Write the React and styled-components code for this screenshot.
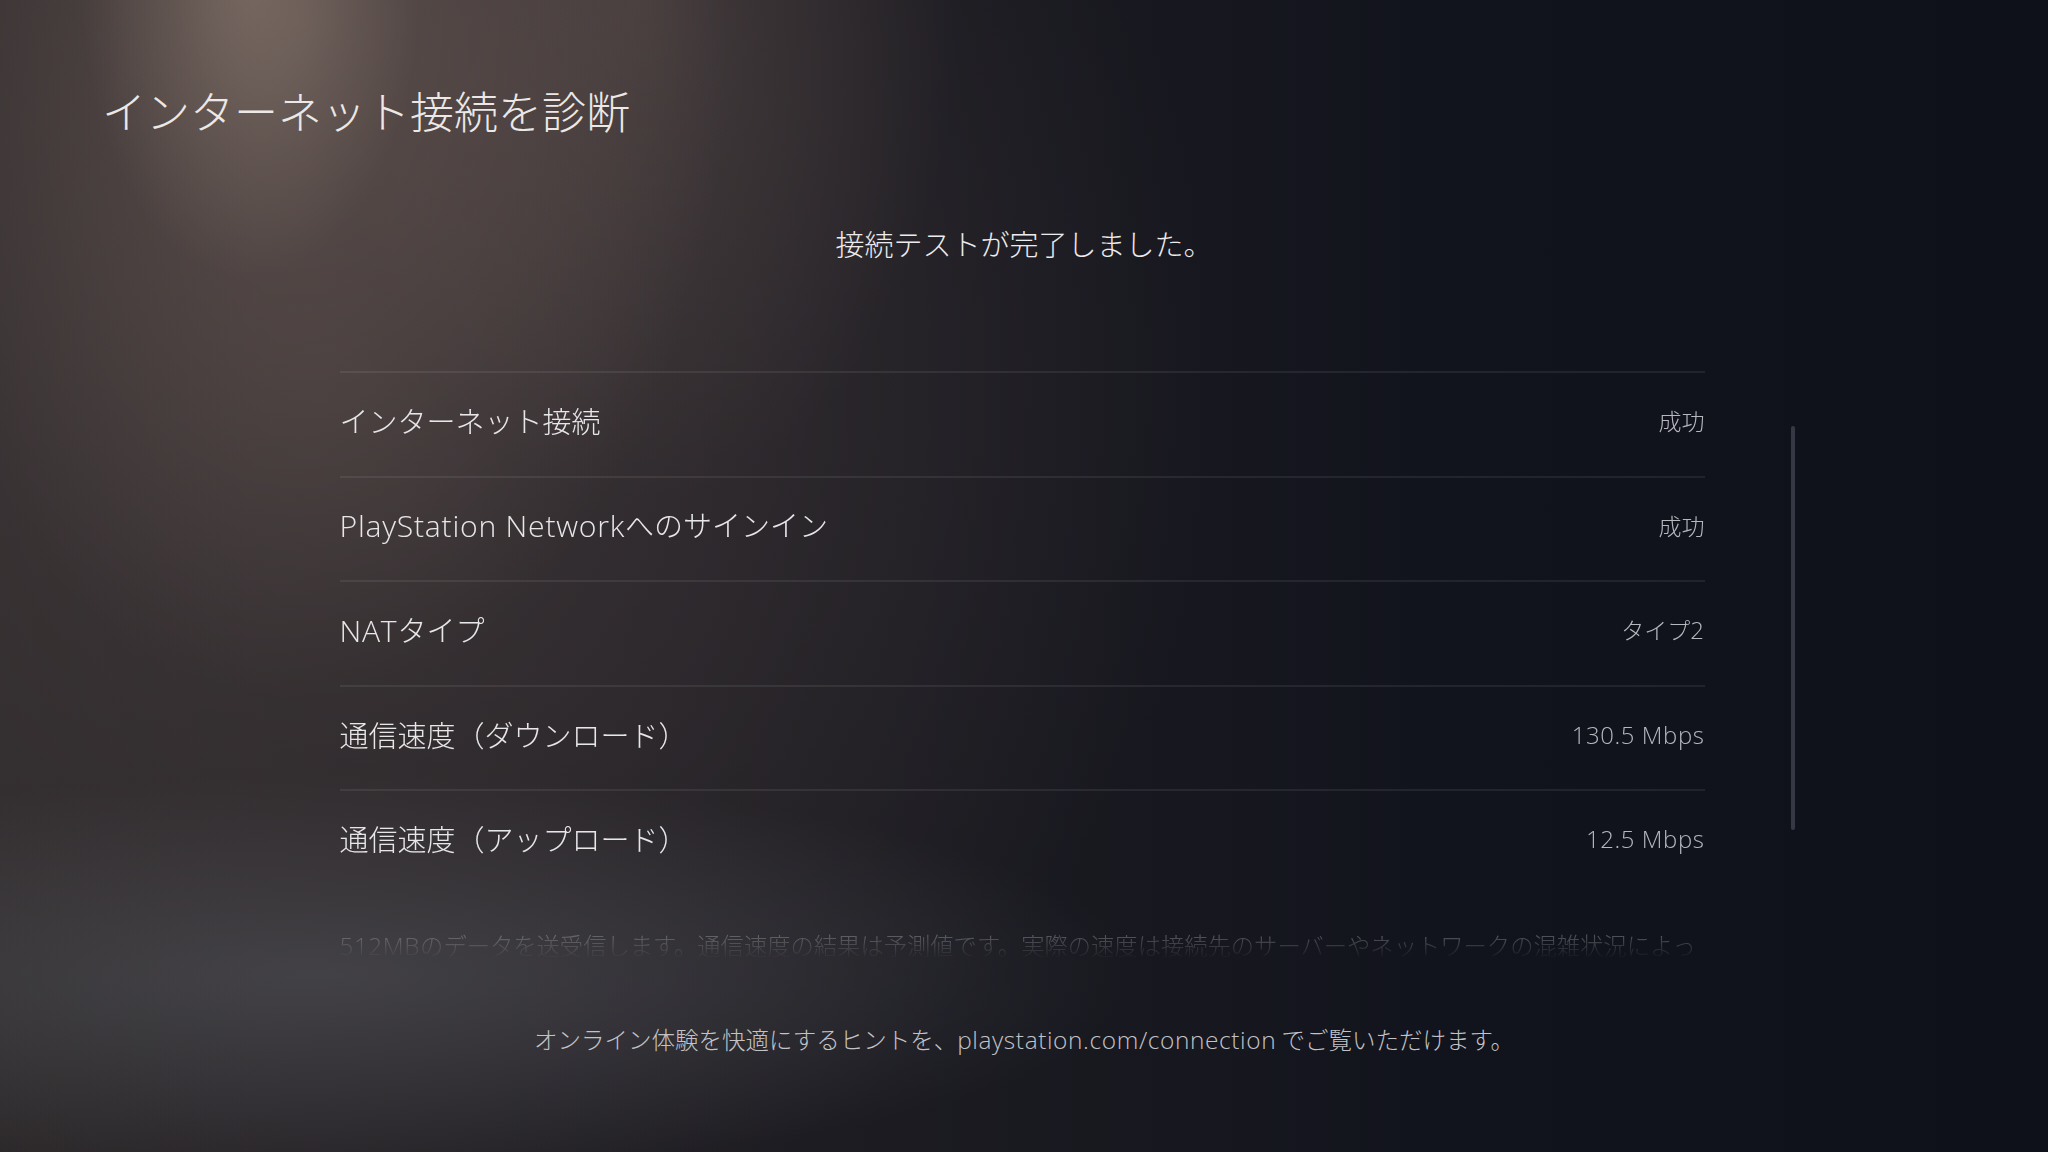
import React from 'react';
import styled, { createGlobalStyle } from 'styled-components';

const GlobalStyle = createGlobalStyle`
  html, body {
    margin: 0;
    padding: 0;
    background: #10121b;
  }
  body {
    font-family: "Noto Sans CJK JP", "Noto Sans", sans-serif;
    -webkit-font-smoothing: antialiased;
  }
`;

const Screen = styled.div`
  width: 2048px;
  height: 1152px;
  overflow: hidden;
  display: flex;
  flex-direction: column;
  background:
    radial-gradient(ellipse 170px 300px at 250px -20px, rgba(190, 168, 150, 0.32), rgba(190, 168, 150, 0) 100%),
    radial-gradient(ellipse 430px 680px at 300px 20px, rgba(140, 118, 108, 0.42), rgba(140, 118, 108, 0) 100%),
    radial-gradient(ellipse 320px 500px at 640px 0px, rgba(120, 100, 94, 0.32), rgba(120, 100, 94, 0) 100%),
    radial-gradient(ellipse 900px 900px at 320px 380px, rgba(82, 70, 70, 0.55), rgba(82, 70, 70, 0) 100%),
    radial-gradient(ellipse 820px 200px at 320px 975px, rgba(95, 100, 108, 0.45), rgba(95, 100, 108, 0) 100%),
    linear-gradient(to right, #2a2729 0%, #1d1c22 40%, #12141d 70%, #0e111a 100%);
`;

// Latin runs are set a touch larger and looser, like the console's own typeface
const Latin = styled.span`
  font-family: "Open Sans", "Noto Sans", sans-serif;
  font-size: 1.04em;
  letter-spacing: 0.025em;
`;

const Header = styled.header`
  padding: 80px 0 0 102px;
`;

const Title = styled.h1`
  margin: 0;
  font-size: 44px;
  line-height: 60px;
  font-weight: 300;
  color: #ebe8e6;
`;

const Status = styled.p`
  margin: 83px 0 0;
  text-align: center;
  font-size: 29px;
  line-height: 40px;
  font-weight: 300;
  color: #ecebed;
`;

const Body = styled.div`
  margin-top: 108px;
  display: flex;
  justify-content: center;
  padding-left: 86px;
  gap: 86px;
`;

const ScrollArea = styled.div`
  width: 1365px;
  height: 588px;
  overflow: hidden;
  -webkit-mask-image: linear-gradient(to bottom, #000 0, #000 532px, transparent 588px);
  mask-image: linear-gradient(to bottom, #000 0, #000 532px, transparent 588px);
`;

const List = styled.ul`
  list-style: none;
  margin: 0;
  padding: 0;
`;

const Row = styled.li`
  height: 104.5px;
  box-sizing: border-box;
  padding-bottom: 8px;
  border-top: 2px solid rgba(255, 255, 255, 0.075);
  display: flex;
  align-items: center;
  justify-content: space-between;
`;

const Label = styled.span`
  font-size: 29px;
  font-weight: 300;
  color: #e7e6e9;
`;

const Value = styled.span`
  font-size: 23px;
  font-weight: 300;
  color: #b7b7be;
`;

const Note = styled.p`
  margin: 33px 0 0;
  font-size: 23.3px;
  line-height: 36px;
  font-weight: 300;
  color: #a9a9b0;
  line-break: loose;
`;

const Track = styled.div`
  width: 4px;
  padding-top: 55px;
`;

const Thumb = styled.div`
  width: 4px;
  height: 404px;
  border-radius: 2px;
  background: #363944;
`;

const Footer = styled.footer`
  margin-top: 62px;
  text-align: center;
  font-size: 23.5px;
  line-height: 36px;
  font-weight: 300;
  color: #c2c2c7;
`;

const results = [
  { id: 'net', label: 'インターネット接続', value: '成功' },
  {
    id: 'psn',
    label: (
      <>
        <Latin>PlayStation Network</Latin>へのサインイン
      </>
    ),
    value: '成功',
  },
  {
    id: 'nat',
    label: (
      <>
        <Latin>NAT</Latin>タイプ
      </>
    ),
    value: (
      <>
        タイプ<Latin>2</Latin>
      </>
    ),
  },
  { id: 'down', label: '通信速度（ダウンロード）', value: <Latin>130.5 Mbps</Latin> },
  { id: 'up', label: '通信速度（アップロード）', value: <Latin>12.5 Mbps</Latin> },
];

export default function App() {
  return (
    <>
      <GlobalStyle />
      <Screen>
        <Header>
          <Title>インターネット接続を診断</Title>
        </Header>
        <Status>接続テストが完了しました。</Status>
        <Body>
          <ScrollArea>
            <List>
              {results.map((r) => (
                <Row key={r.id}>
                  <Label>{r.label}</Label>
                  <Value>{r.value}</Value>
                </Row>
              ))}
            </List>
            <Note>
              <Latin>512MB</Latin>のデータを送受信します。通信速度の結果は予測値です。実際の速度は接続先のサーバーやネットワークの混雑状況によって異なります。
            </Note>
          </ScrollArea>
          <Track>
            <Thumb />
          </Track>
        </Body>
        <Footer>
          オンライン体験を快適にするヒントを、<Latin>playstation.com/connection</Latin> でご覧いただけます。
        </Footer>
      </Screen>
    </>
  );
}
